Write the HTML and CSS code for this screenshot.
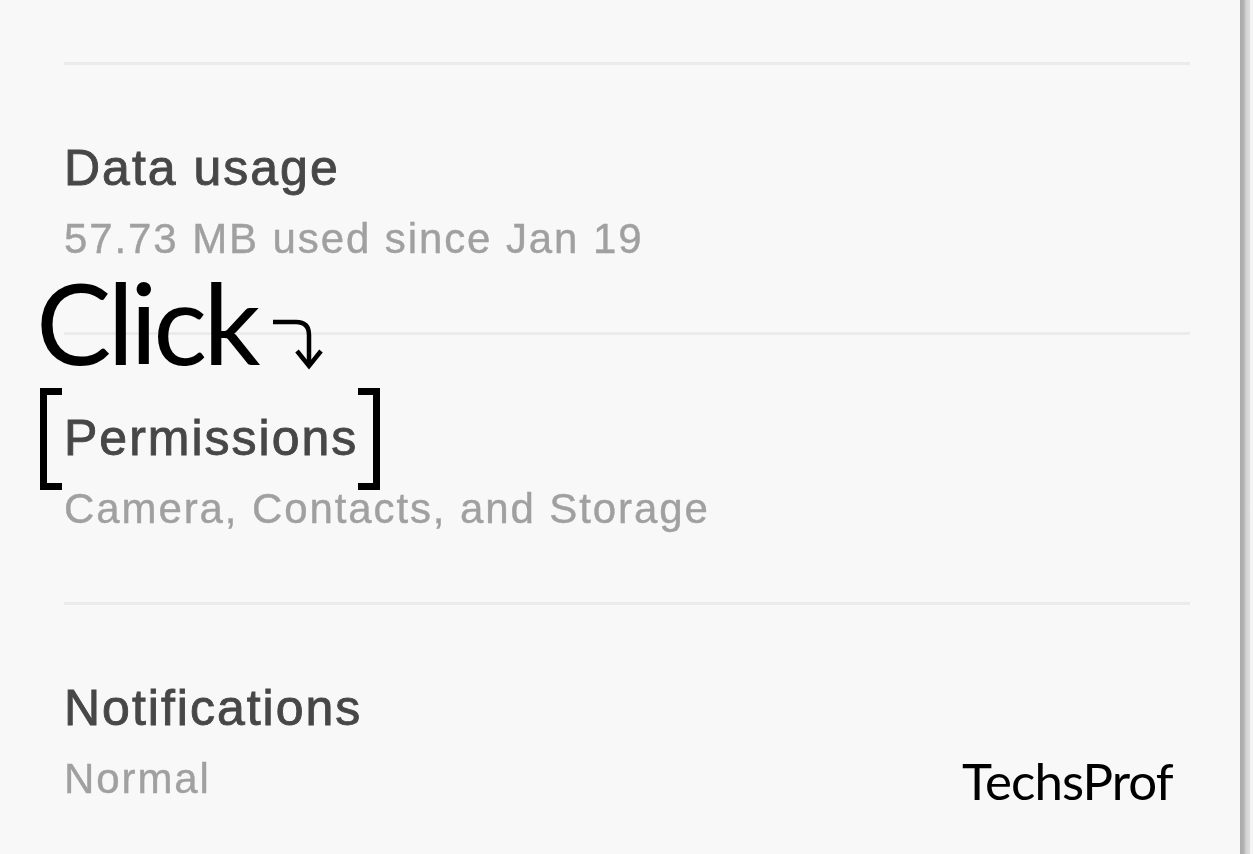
FILE: index.html
```html
<!DOCTYPE html>
<html lang="en">
<head>
    <meta charset="UTF-8">
    <title>App info</title>
    <meta name="viewport" content="width=device-width, initial-scale=1.0">
    <link rel="stylesheet" href="styles.css">
</head>
<body>
    <div class="page">
        <div class="content">
            <div class="list">
                <div class="item">
                    <div class="item-title">Data usage</div>
                    <div class="item-sub">57.73 MB used since Jan 19</div>
                </div>
                <div class="item">
                    <div class="item-title">Permissions</div>
                    <div class="item-sub">Camera, Contacts, and Storage</div>
                </div>
                <div class="item">
                    <div class="item-title">Notifications</div>
                    <div class="item-sub">Normal</div>
                </div>
            </div>

            <!-- annotation drawn over the screenshot -->
            <div class="note-click">Click</div>
            <svg class="note-arrow" width="56" height="56" viewBox="0 0 56 56">
                <path d="M3 5 H26 Q39 5 39 18 V47" fill="none" stroke="#000" stroke-width="4.5"/>
                <path d="M27 34 L39 49 L51 34" fill="none" stroke="#000" stroke-width="4.5"/>
            </svg>
            <div class="note-bracket"></div>
            <div class="watermark">TechsProf</div>
        </div>
        <div class="edge"></div>
    </div>
</body>
</html>
```

FILE: styles.css
```css
body {
    margin: 0;
    padding: 0;
    background-color: #f8f8f8;
    font-family: "Liberation Sans", Arial, sans-serif;
    overflow: hidden;
}
.page {
    display: flex;
    height: 854px;
}
.content {
    position: relative;
    width: 1240px;
    background-color: #f8f8f8;
}
.edge {
    width: 13px;
    background: linear-gradient(to right, #a9a9a9 0, #b4b4b4 4px, #d3d3d3 6px, #dedede 10px, #f4f4f4 10px);
}
.list {
    padding: 62px 50px 0 64px;
}
.item {
    box-sizing: border-box;
    height: 270px;
    border-top: 3px solid #ebebeb;
    padding-top: 78px;
}
.item-title {
    font-size: 50px;
    line-height: 50px;
    color: #474747;
    letter-spacing: 2px;
    -webkit-text-stroke: 0.9px #474747;
    filter: blur(0.7px);
}
.item-sub {
    margin-top: 25px;
    font-size: 42px;
    line-height: 42px;
    color: #a0a0a0;
    letter-spacing: 1.9px;
    -webkit-text-stroke: 0.4px #a0a0a0;
    filter: blur(0.7px);
}
.note-click {
    position: absolute;
    left: 36px;
    top: 265px;
    font-family: Lato, "Noto Sans", sans-serif;
    font-size: 113px;
    line-height: 1;
    color: #000;
    letter-spacing: -4px;
}
.note-arrow {
    position: absolute;
    left: 270px;
    top: 317px;
}
.note-bracket {
    position: absolute;
    left: 40px;
    top: 388px;
    width: 340px;
    height: 102px;
}
.note-bracket::before,
.note-bracket::after {
    content: "";
    position: absolute;
    top: 0;
    box-sizing: border-box;
    width: 22px;
    height: 102px;
    border: 7px solid #000;
}
.note-bracket::before {
    left: 0;
    border-right: none;
}
.note-bracket::after {
    right: 0;
    border-left: none;
}
.watermark {
    position: absolute;
    left: 962px;
    top: 755px;
    font-family: Lato, "Noto Sans", sans-serif;
    font-size: 51px;
    line-height: 1;
    color: #000;
    letter-spacing: -0.9px;
}
```
